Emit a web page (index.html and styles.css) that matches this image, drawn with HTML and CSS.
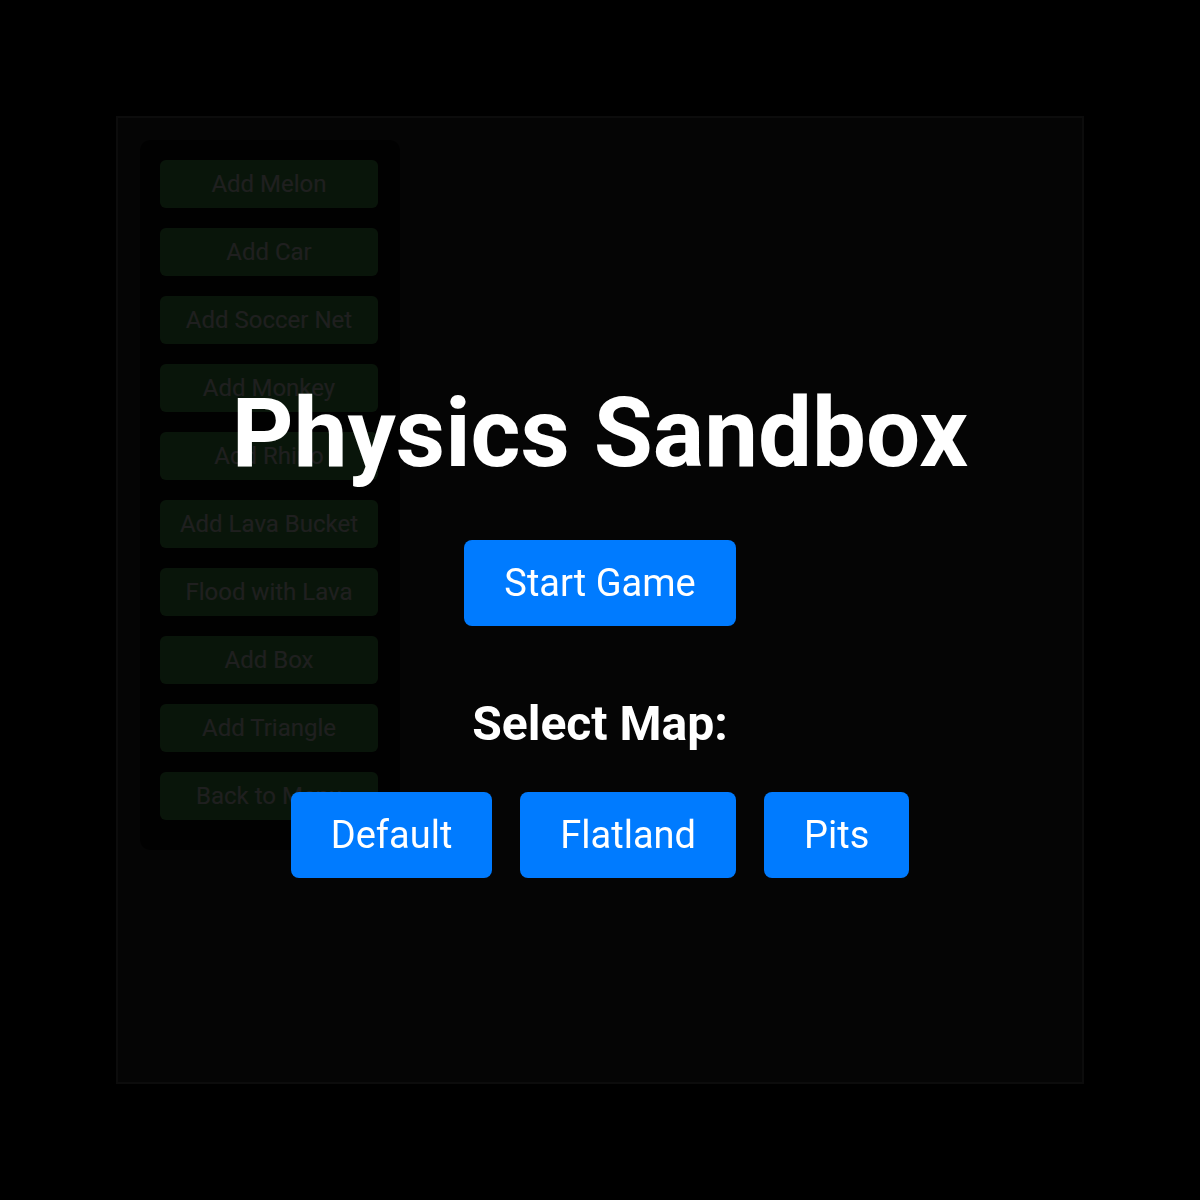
FILE: index.html
```html
<!DOCTYPE html>
<html lang="en">
<head>
    <meta charset="UTF-8">
    <meta name="viewport" content="width=device-width, initial-scale=1.0">
    <title>Physics Sandbox</title>
    <link rel="stylesheet" href="styles.css">
</head>
<body>
    <div class="gameContainer">
        <div class="controls">
            <button class="ctrlBtn">Add Melon</button>
            <button class="ctrlBtn">Add Car</button>
            <button class="ctrlBtn">Add Soccer Net</button>
            <button class="ctrlBtn">Add Monkey</button>
            <button class="ctrlBtn">Add Rhino</button>
            <button class="ctrlBtn">Add Lava Bucket</button>
            <button class="ctrlBtn">Flood with Lava</button>
            <button class="ctrlBtn">Add Box</button>
            <button class="ctrlBtn">Add Triangle</button>
            <button class="ctrlBtn">Back to Menu</button>
        </div>
    </div>

    <div class="menu">
        <h1>Physics Sandbox</h1>
        <button class="menuBtn">Start Game</button>
        <h2>Select Map:</h2>
        <div class="mapList">
            <button class="menuBtn">Default</button>
            <button class="menuBtn">Flatland</button>
            <button class="menuBtn">Pits</button>
        </div>
    </div>
</body>
</html>
```

FILE: styles.css
```css
*{margin: 0; padding: 0; box-sizing: border-box; font-family: Roboto, "Liberation Sans", sans-serif;}
body{background-color: #000; display: flex; align-items: center; justify-content: center; height: 100vh;}
button{border: none; cursor: pointer;}

.gameContainer{width: 968px; height: 968px; border: 2px solid #666; background-color: #2c2c2c; padding: 22px;}
.controls{width: 260px; padding: 20px 22px 30px 20px; background-color: #0c0c0c; border-radius: 10px; display: flex; flex-direction: column; gap: 20px;}
.ctrlBtn{height: 48px; width: 218px; background-color: #4caf50; color: #fff; font-size: 24px; border-radius: 6px;}

.menu{position: fixed; inset: 0; background-color: rgba(0, 0, 0, .88); display: flex; flex-direction: column; align-items: center; padding-top: 375px;}
.menu h1{color: #fff; font-size: 96px; font-weight: bold; line-height: 117px; margin-bottom: 48px;}
.menu h2{color: #fff; font-size: 48px; font-weight: bold; line-height: 56px; margin: 70px 0 40px;}
.menuBtn{background-color: #007bff; color: #fff; font-size: 38px; line-height: 46px; padding: 20px 40px; border-radius: 8px;}
.mapList{display: flex; gap: 28px;}
```
